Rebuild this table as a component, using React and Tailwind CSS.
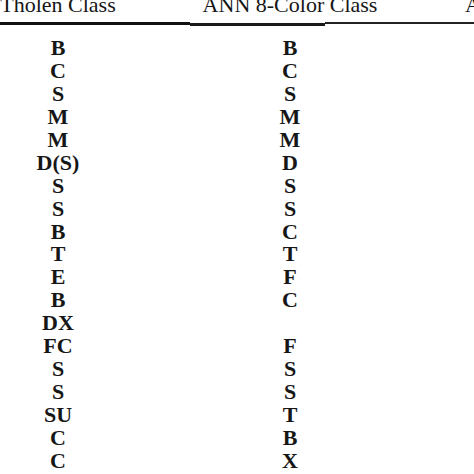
const colA = ["B", "C", "S", "M", "M", "D(S)", "S", "S", "B", "T", "E", "B", "DX", "FC", "S", "S", "SU", "C", "C"];
const colB = ["B", "C", "S", "M", "M", "D", "S", "S", "C", "T", "F", "C", "", "F", "S", "S", "T", "B", "X"];

export default function App() {
  return (
    <div
      className="w-[474px] h-[474px] overflow-hidden bg-white text-[#161616]"
      style={{ fontFamily: '"Liberation Serif", "Times New Roman", serif' }}
    >
      {/* header */}
      <div className="-ml-[58px] mt-[-6px] grid grid-cols-[232px_232px_232px] text-[22px] leading-[22px] whitespace-nowrap">
        <div className="text-center">Tholen Class</div>
        <div className="text-center">ANN 8-Color Class</div>
        <div className="pl-[59px]">ANN 4-Color Class</div>
      </div>

      {/* rule */}
      <div className="mt-[6px] flex items-start">
        <div className="w-[190px] h-[3px] bg-[#111]" />
        <div className="w-[135px] h-[3px] mt-px bg-[#1a1a1a]" />
        <div className="flex-1 h-[2px] bg-[#222]" />
      </div>

      {/* body */}
      <div className="-ml-[58px] mt-[11px] grid grid-cols-[232px_232px_232px] font-bold text-[22px] leading-[22.94px]">
        <div className="flex flex-col items-center">
          {colA.map((c, i) => (
            <div key={i} className="h-[22.94px]">{c}</div>
          ))}
        </div>
        <div className="flex flex-col items-center">
          {colB.map((c, i) => (
            <div key={i} className="h-[22.94px]">{c}</div>
          ))}
        </div>
        <div />
      </div>
    </div>
  );
}
